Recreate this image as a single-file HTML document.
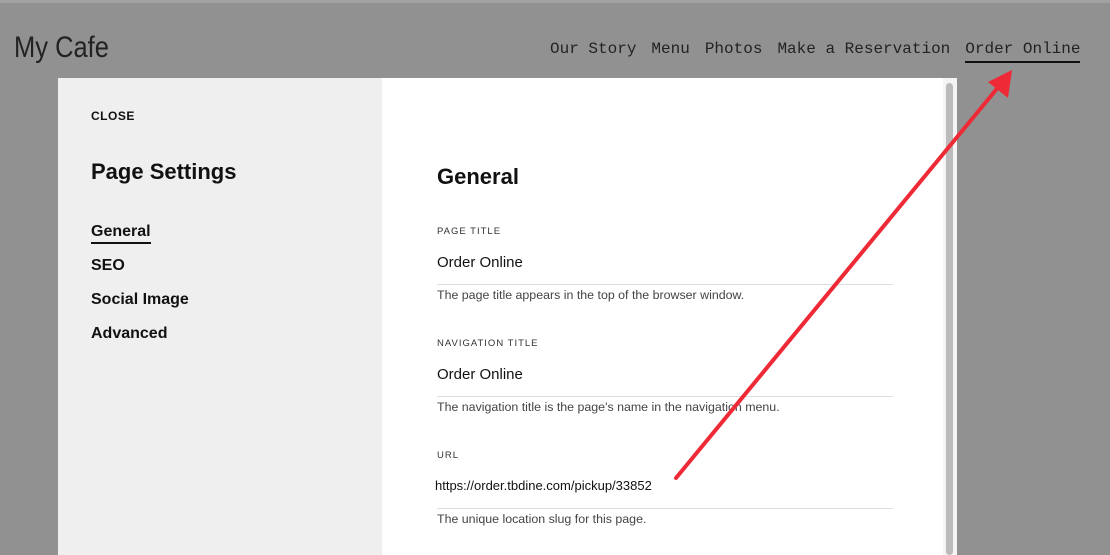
<!DOCTYPE html>
<html><head><style>
body{margin:0;width:1110px;height:555px;overflow:hidden;background:#919191;font-family:"Liberation Sans",sans-serif;position:relative}
.top{position:absolute;left:0;top:0;width:1110px;height:3px;background:#a2a2a2}
.logo{position:absolute;left:14px;top:31px;font-family:"Liberation Sans Narrow","Liberation Sans",sans-serif;font-stretch:condensed;font-size:30px;color:#222;transform:scaleX(.85);transform-origin:left}
.nav{position:absolute;left:550px;top:40px;font-family:"Liberation Mono",monospace;font-size:16px;color:#222;white-space:nowrap}
.nav span{margin-right:15px}
.nav span.u{margin-right:0;border-bottom:2px solid #111;padding-bottom:3px}
.modal{position:absolute;left:58px;top:78px;width:899px;height:477px;background:#fff}
.left{position:absolute;left:0;top:0;width:324px;height:477px;background:#efefef}
.close{position:absolute;left:33px;top:31px;font-size:12px;font-weight:bold;letter-spacing:.5px;color:#111}
.ps{position:absolute;left:33px;top:81px;font-size:22px;font-weight:bold;color:#111}
.item{position:absolute;left:33px;font-size:16px;font-weight:bold;color:#111}
.sb{position:absolute;left:885px;top:0;width:14px;height:477px;background:#f4f4f4}
.sb div{position:absolute;left:3px;top:5px;width:7px;height:472px;background:#bbb;border-radius:4px}
h2{position:absolute;left:379px;top:86px;margin:0;font-size:22px;color:#111}
.lab{position:absolute;left:379px;font-size:9.5px;letter-spacing:1px;color:#333}
.val{position:absolute;left:379px;font-size:15px;color:#111}
.line{position:absolute;left:379px;width:456px;height:1px;background:#ddd}
.help{position:absolute;left:379px;font-size:12.4px;color:#444}
svg{position:absolute;left:0;top:0}
</style></head><body>
<div class="top"></div>
<div class="logo">My Cafe</div>
<div class="nav"><span>Our Story</span><span>Menu</span><span>Photos</span><span>Make a Reservation</span><span class="u">Order Online</span></div>
<div class="modal">
<div class="left">
<div class="close">CLOSE</div>
<div class="ps">Page Settings</div>
<div class="item" style="top:145px;border-bottom:2px solid #111;padding-bottom:1px">General</div>
<div class="item" style="top:179px">SEO</div>
<div class="item" style="top:213px">Social Image</div>
<div class="item" style="top:247px">Advanced</div>
</div>
<h2>General</h2>
<div class="lab" style="top:148px">PAGE TITLE</div>
<div class="val" style="top:176px">Order Online</div>
<div class="line" style="top:206px"></div>
<div class="help" style="top:210px">The page title appears in the top of the browser window.</div>
<div class="lab" style="top:260px">NAVIGATION TITLE</div>
<div class="val" style="top:288px">Order Online</div>
<div class="line" style="top:318px"></div>
<div class="help" style="top:322px">The navigation title is the page's name in the navigation menu.</div>
<div class="lab" style="top:372px">URL</div>
<div class="val" style="top:400px;left:377px;font-size:13px">https://order.tbdine.com/pickup/33852</div>
<div class="line" style="top:430px"></div>
<div class="help" style="top:434px">The unique location slug for this page.</div>
<div class="sb"><div></div></div>
</div>
<svg width="1110" height="555"><line x1="676" y1="478" x2="1000" y2="85" stroke="#ee2a36" stroke-width="4" stroke-linecap="round"/><polygon points="1012,70 1008,98 988,82" fill="#ee2a36"/></svg>
</body></html>
